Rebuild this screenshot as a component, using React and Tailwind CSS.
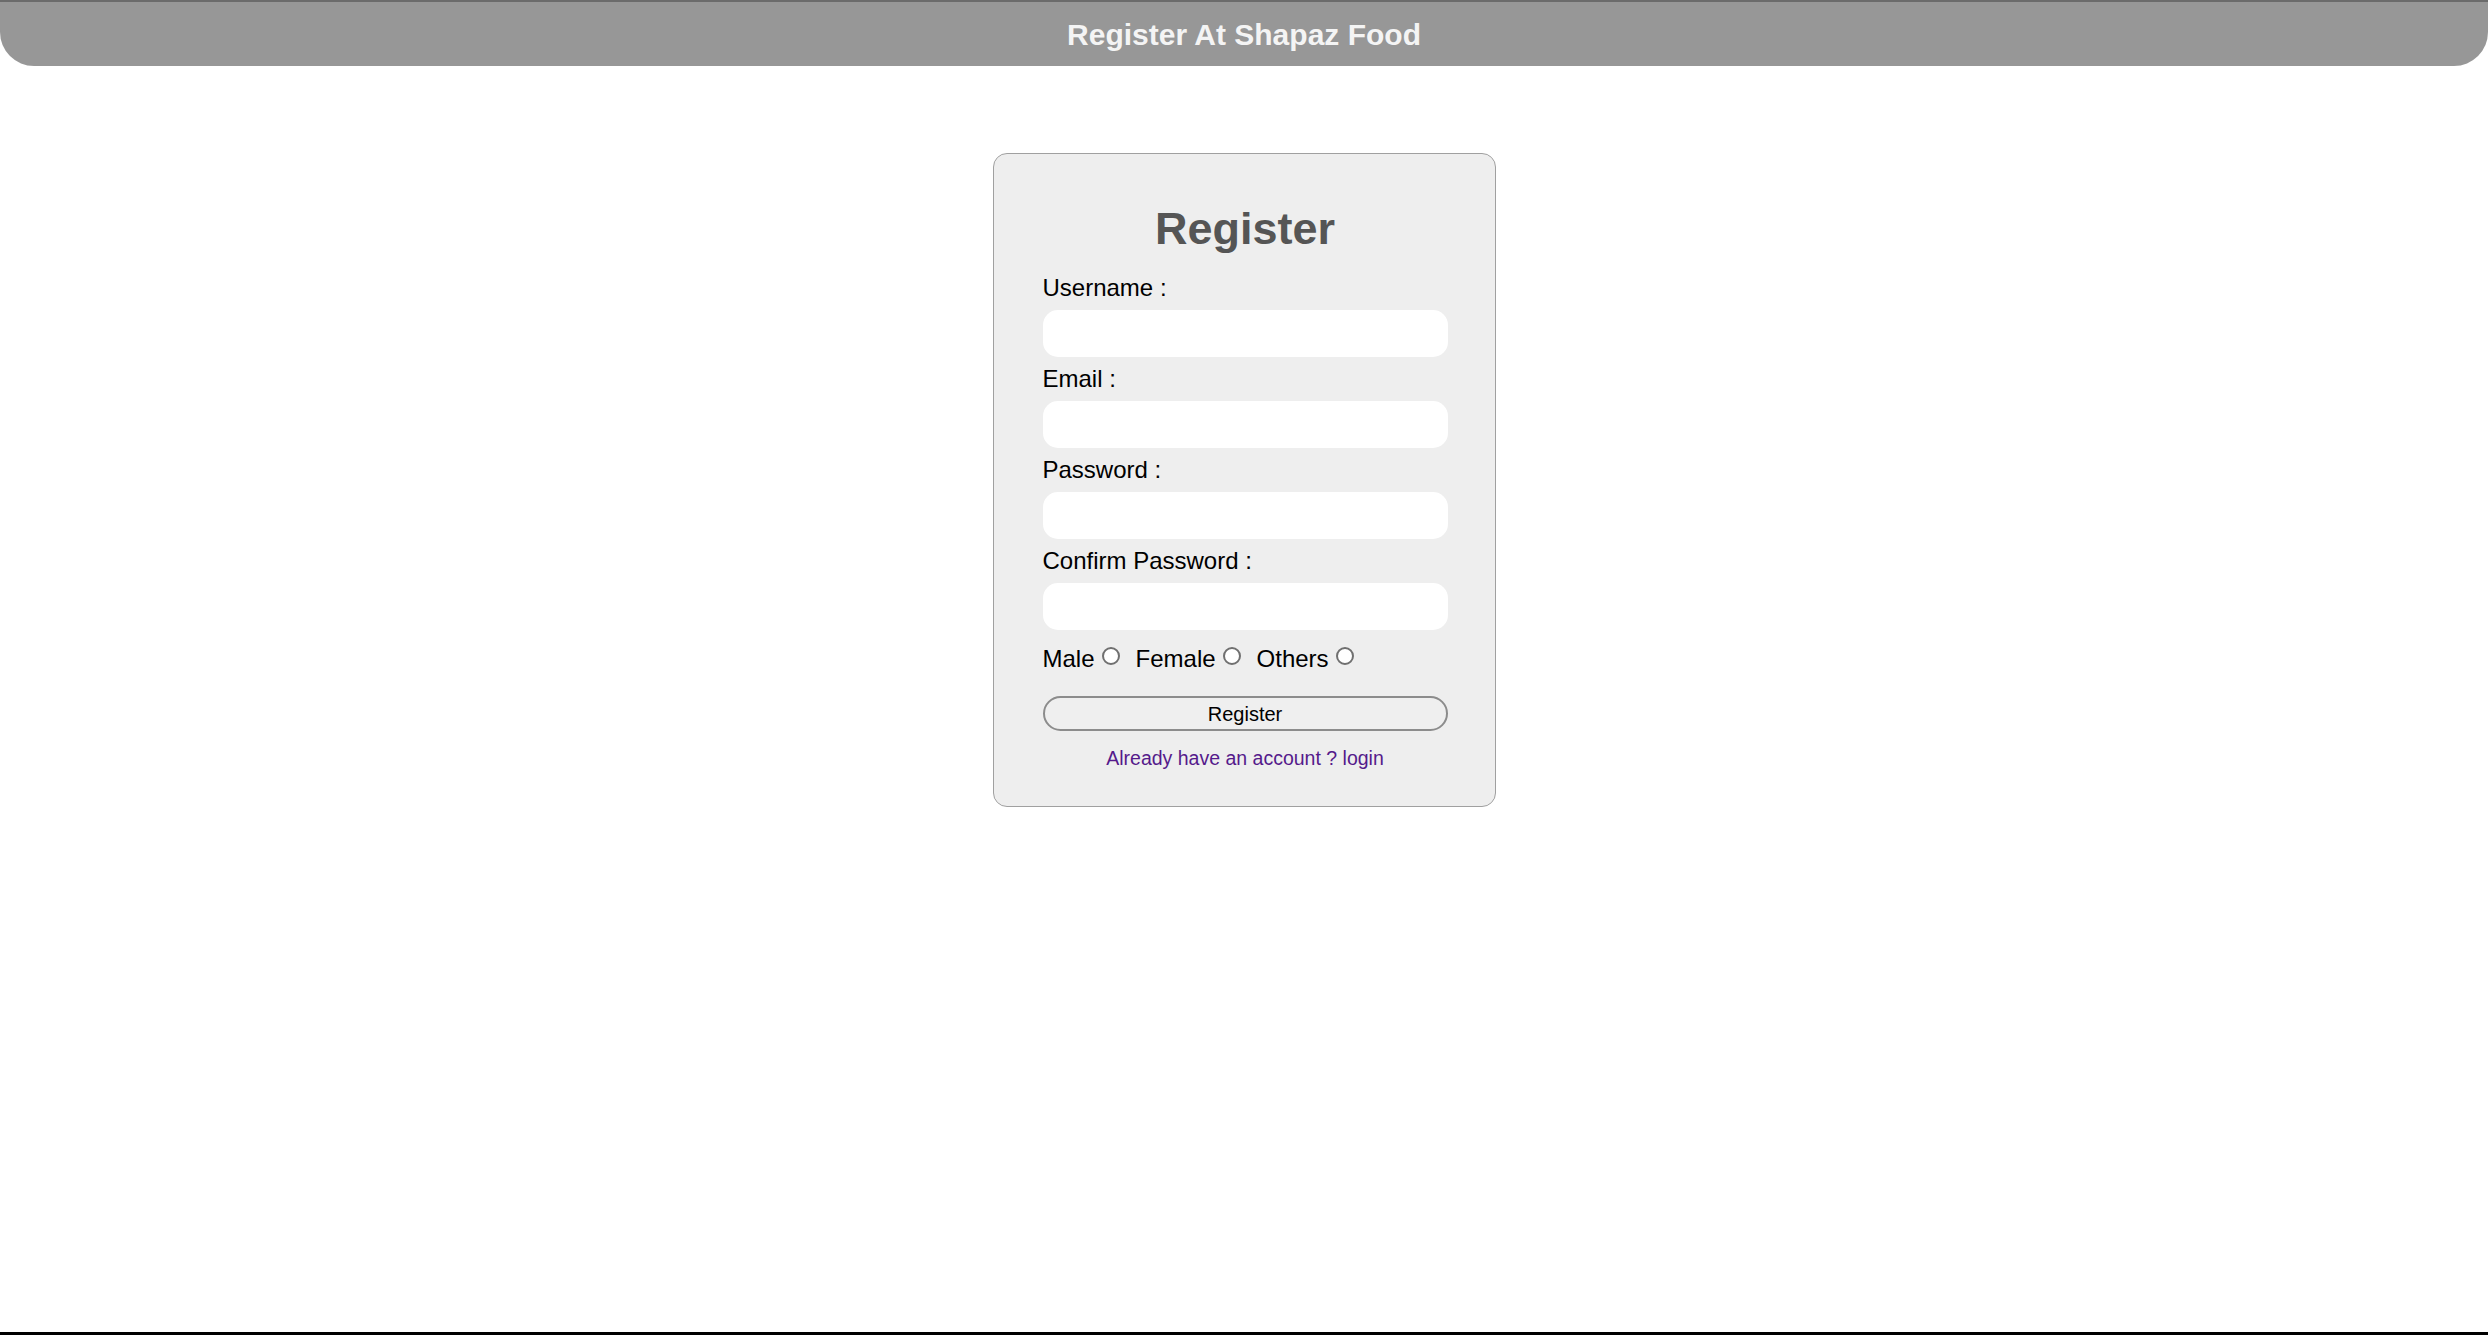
import { useState } from 'react';

const FIELDS = [
  { name: 'username', label: 'Username :', type: 'text' },
  { name: 'email', label: 'Email :', type: 'email' },
  { name: 'password', label: 'Password :', type: 'password' },
  { name: 'confirm', label: 'Confirm Password :', type: 'password' },
];

const GENDERS = ['Male', 'Female', 'Others'];

export default function App() {
  const [form, setForm] = useState({ username: '', email: '', password: '', confirm: '' });
  const [gender, setGender] = useState('');

  const update = (name) => (e) => setForm(prev => ({ ...prev, [name]: e.target.value }));

  return (
    <div className="min-h-screen flex flex-col bg-white font-['Liberation_Sans',Arial,sans-serif]">
      {/* top bar */}
      <header className="h-[66px] border-t-2 border-[#6b6b6b] bg-[#979797] rounded-b-[34px] flex items-center justify-center pt-[1px]">
        <h1 className="text-[30px] leading-none font-bold text-[#f4f4f4]">Register At Shapaz Food</h1>
      </header>

      <form
        onSubmit={e => e.preventDefault()}
        className="mx-auto mt-[87px] w-[503px] bg-[#eeeeee] border border-[#a0a0a0] rounded-[14px] pl-[49px] pr-[47px] pt-[52px] pb-[36px]"
      >
        <h2 className="text-[45px] leading-none font-bold text-[#555555] text-center mb-[23px]">Register</h2>

        {FIELDS.map(f => (
          <div key={f.name} className="mb-[8px]">
            <label htmlFor={f.name} className="block h-[28px] leading-[28px] text-[24px] text-black mb-[8px]">
              {f.label}
            </label>
            <input
              id={f.name}
              type={f.type}
              value={form[f.name]}
              onChange={update(f.name)}
              className="block w-full h-[47px] rounded-[15px] bg-white border-0 outline-none px-4 text-[22px]"
            />
          </div>
        ))}

        <div className="flex items-start h-[28px] leading-[28px] text-[24px] text-black mt-[15px]">
          {GENDERS.map(g => (
            <label key={g} className="flex items-start mr-[16px] cursor-pointer">
              <span>{g}</span>
              <input
                type="radio"
                name="gender"
                checked={gender === g}
                onChange={() => setGender(g)}
                className="appearance-none ml-[7px] mt-[2px] w-[18px] h-[18px] rounded-full border-2 border-[#707070] bg-white checked:bg-[#0075ff]"
              />
            </label>
          ))}
        </div>

        <button
          type="submit"
          className="block w-full h-[35px] mt-[23px] rounded-full border-2 border-[#8c8c8c] bg-[#efefef] text-[20px] text-black"
        >
          Register
        </button>

        <p className="mt-[16px] text-center text-[19.5px] leading-[23px]">
          <a href="#" className="text-[#551a8b] no-underline">Already have an account ? login</a>
        </p>
      </form>

      <div className="mt-auto h-[3px] bg-black" />
    </div>
  );
}
